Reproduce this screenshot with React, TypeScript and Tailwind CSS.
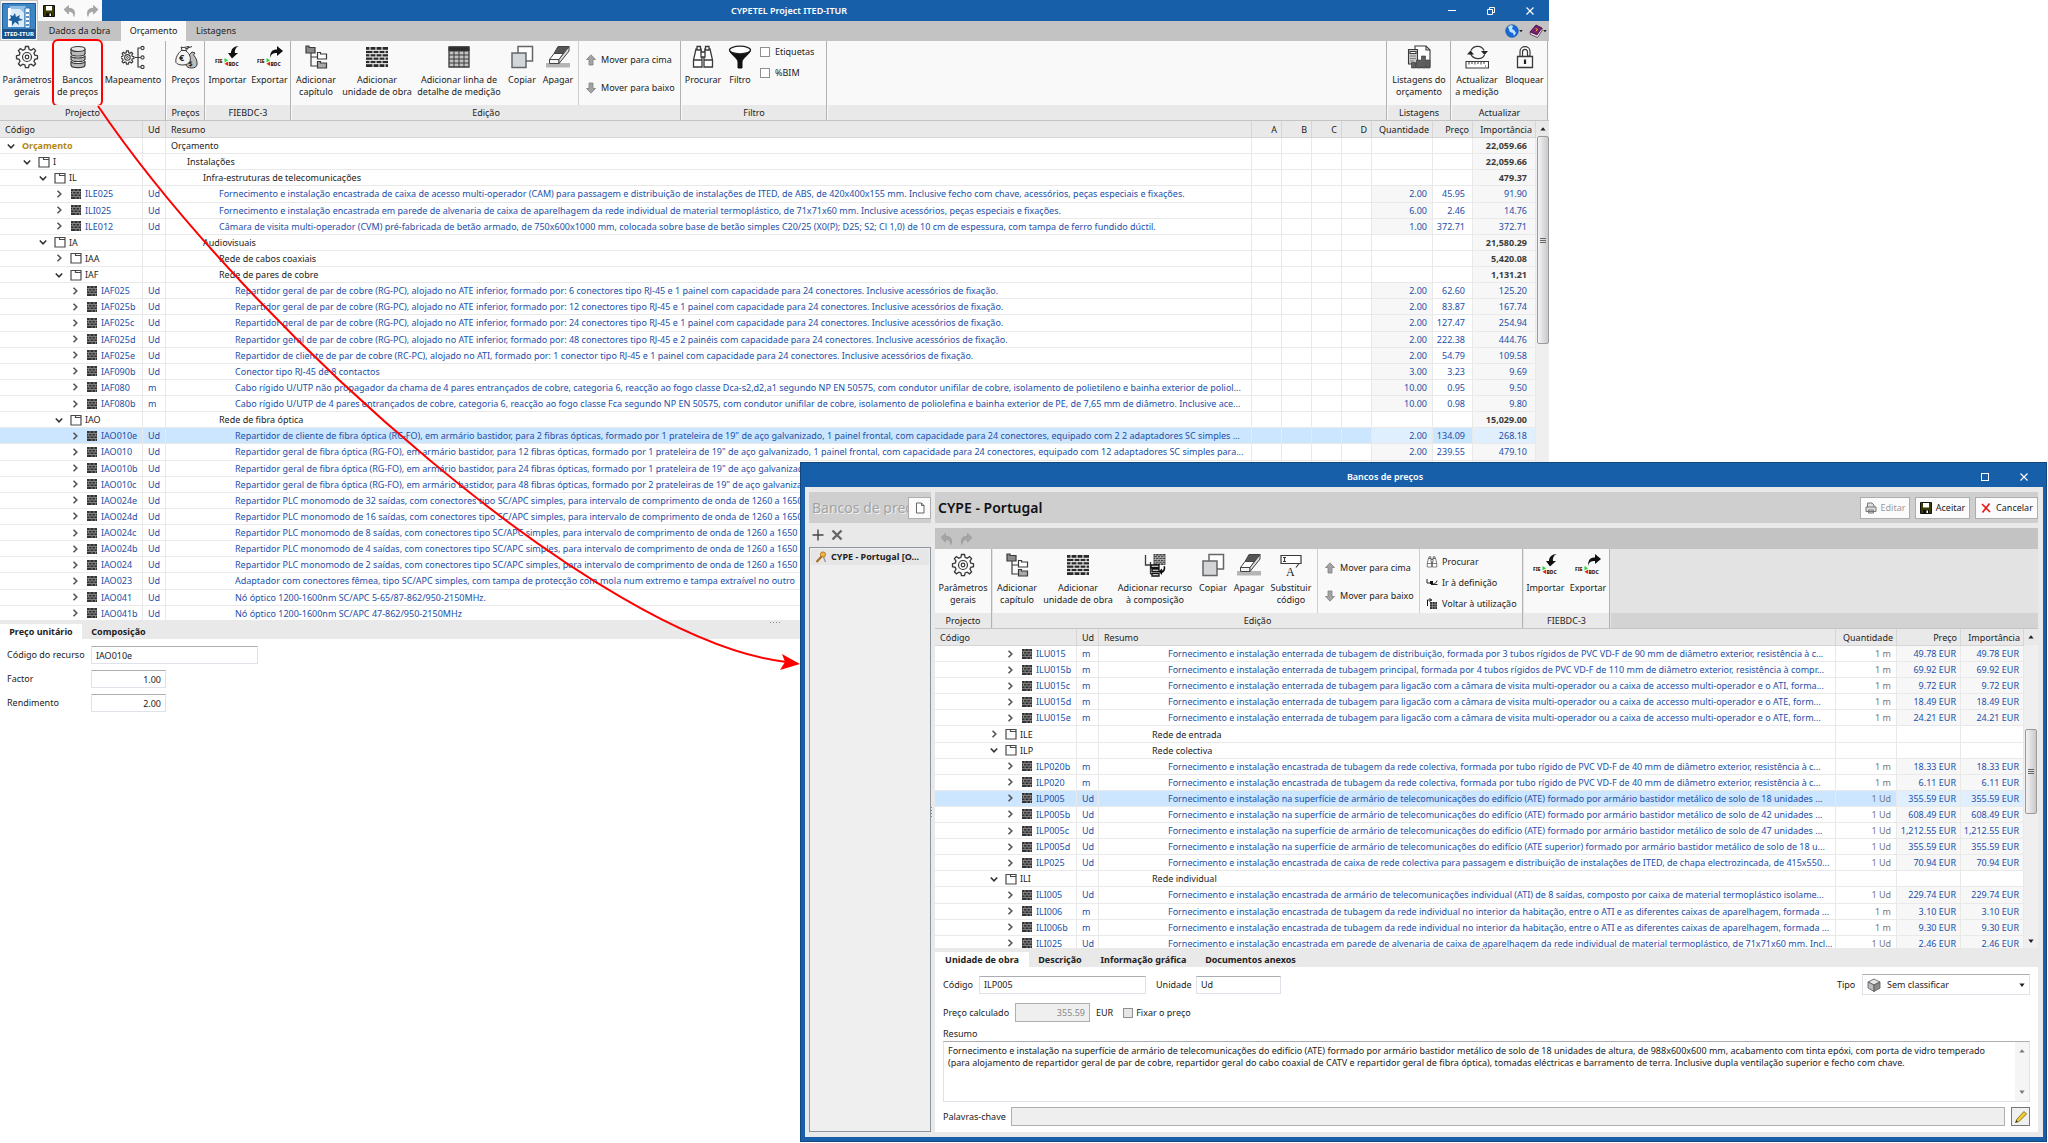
import React from "react"

import type { FC, ReactNode } from "react"

import clsx from "clsx"

type Item = {
  level: number
  open?: boolean
  code: string
  unit?: string
  text: string
  qty?: string
  price?: string
  total?: string
  selected?: boolean
}

const chapter = (level: number, open: boolean, code: string, text: string, total?: string): Item => ({
  level,
  open,
  code,
  text,
  total,
})

const work = (
  level: number,
  code: string,
  unit: string,
  text: string,
  qty: string,
  price: string,
  total: string,
  selected = false
): Item => ({ level, code, unit, text, qty, price, total, selected })

const budget: Item[] = [
  chapter(0, true, "Orçamento", "Orçamento", "22,059.66"),
  chapter(1, true, "I", "Instalações", "22,059.66"),
  chapter(2, true, "IL", "Infra-estruturas de telecomunicações", "479.37"),
  work(3, "ILE025", "Ud", "Fornecimento e instalação encastrada de caixa de acesso multi-operador (CAM) para passagem e distribuição de instalações de ITED, de ABS, de 420x400x155 mm. Inclusive fecho com chave, acessórios, peças especiais e fixações.", "2.00", "45.95", "91.90"),
  work(3, "ILI025", "Ud", "Fornecimento e instalação encastrada em parede de alvenaria de caixa de aparelhagem da rede individual de material termoplástico, de 71x71x60 mm. Inclusive acessórios, peças especiais e fixações.", "6.00", "2.46", "14.76"),
  work(3, "ILE012", "Ud", "Câmara de visita multi-operador (CVM) pré-fabricada de betão armado, de 750x600x1000 mm, colocada sobre base de betão simples C20/25 (X0(P); D25; S2; Cl 1,0) de 10 cm de espessura, com tampa de ferro fundido dúctil.", "1.00", "372.71", "372.71"),
  chapter(2, true, "IA", "Audiovisuais", "21,580.29"),
  chapter(3, false, "IAA", "Rede de cabos coaxiais", "5,420.08"),
  chapter(3, true, "IAF", "Rede de pares de cobre", "1,131.21"),
  work(4, "IAF025", "Ud", "Repartidor geral de par de cobre (RG-PC), alojado no ATE inferior, formado por: 6 conectores tipo RJ-45 e 1 painel com capacidade para 24 conectores. Inclusive acessórios de fixação.", "2.00", "62.60", "125.20"),
  work(4, "IAF025b", "Ud", "Repartidor geral de par de cobre (RG-PC), alojado no ATE inferior, formado por: 12 conectores tipo RJ-45 e 1 painel com capacidade para 24 conectores. Inclusive acessórios de fixação.", "2.00", "83.87", "167.74"),
  work(4, "IAF025c", "Ud", "Repartidor geral de par de cobre (RG-PC), alojado no ATE inferior, formado por: 24 conectores tipo RJ-45 e 1 painel com capacidade para 24 conectores. Inclusive acessórios de fixação.", "2.00", "127.47", "254.94"),
  work(4, "IAF025d", "Ud", "Repartidor geral de par de cobre (RG-PC), alojado no ATE inferior, formado por: 48 conectores tipo RJ-45 e 2 painéis com capacidade para 24 conectores. Inclusive acessórios de fixação.", "2.00", "222.38", "444.76"),
  work(4, "IAF025e", "Ud", "Repartidor de cliente de par de cobre (RC-PC), alojado no ATI, formado por: 1 conector tipo RJ-45 e 1 painel com capacidade para 24 conectores. Inclusive acessórios de fixação.", "2.00", "54.79", "109.58"),
  work(4, "IAF090b", "Ud", "Conector tipo RJ-45 de 8 contactos", "3.00", "3.23", "9.69"),
  work(4, "IAF080", "m", "Cabo rígido U/UTP não propagador da chama de 4 pares entrançados de cobre, categoria 6, reacção ao fogo classe Dca-s2,d2,a1 segundo NP EN 50575, com condutor unifilar de cobre, isolamento de polietileno e bainha exterior de poliol...", "10.00", "0.95", "9.50"),
  work(4, "IAF080b", "m", "Cabo rígido U/UTP de 4 pares entrançados de cobre, categoria 6, reacção ao fogo classe Fca segundo NP EN 50575, com condutor unifilar de cobre, isolamento de poliolefina e bainha exterior de PE, de 7,65 mm de diâmetro. Inclusive ace...", "10.00", "0.98", "9.80"),
  chapter(3, true, "IAO", "Rede de fibra óptica", "15,029.00"),
  work(4, "IAO010e", "Ud", "Repartidor de cliente de fibra óptica (RC-FO), em armário bastidor, para 2 fibras ópticas, formado por 1 prateleira de 19\" de aço galvanizado, 1 painel frontal, com capacidade para 24 conectores, equipado com 2 2 adaptadores SC simples ...", "2.00", "134.09", "268.18", true),
  work(4, "IAO010", "Ud", "Repartidor geral de fibra óptica (RG-FO), em armário bastidor, para 12 fibras ópticas, formado por 1 prateleira de 19\" de aço galvanizado, 1 painel frontal, com capacidade para 24 conectores, equipado com 12 adaptadores SC simples para...", "2.00", "239.55", "479.10"),
  work(4, "IAO010b", "Ud", "Repartidor geral de fibra óptica (RG-FO), em armário bastidor, para 24 fibras ópticas, formado por 1 prateleira de 19\" de aço galvanizado, 1 painel frontal", "", "", ""),
  work(4, "IAO010c", "Ud", "Repartidor geral de fibra óptica (RG-FO), em armário bastidor, para 48 fibras ópticas, formado por 2 prateleiras de 19\" de aço galvanizado, 2 painéis frontais", "", "", ""),
  work(4, "IAO024e", "Ud", "Repartidor PLC monomodo de 32 saídas, com conectores tipo SC/APC simples, para intervalo de comprimento de onda de 1260 a 1650 nm", "", "", ""),
  work(4, "IAO024d", "Ud", "Repartidor PLC monomodo de 16 saídas, com conectores tipo SC/APC simples, para intervalo de comprimento de onda de 1260 a 1650 nm", "", "", ""),
  work(4, "IAO024c", "Ud", "Repartidor PLC monomodo de 8 saídas, com conectores tipo SC/APC simples, para intervalo de comprimento de onda de 1260 a 1650 nm", "", "", ""),
  work(4, "IAO024b", "Ud", "Repartidor PLC monomodo de 4 saídas, com conectores tipo SC/APC simples, para intervalo de comprimento de onda de 1260 a 1650 nm", "", "", ""),
  work(4, "IAO024", "Ud", "Repartidor PLC monomodo de 2 saídas, com conectores tipo SC/APC simples, para intervalo de comprimento de onda de 1260 a 1650 nm", "", "", ""),
  work(4, "IAO023", "Ud", "Adaptador com conectores fêmea, tipo SC/APC simples, com tampa de protecção com mola num extremo e tampa extraível no outro", "", "", ""),
  work(4, "IAO041", "Ud", "Nó óptico 1200-1600nm SC/APC 5-65/87-862/950-2150MHz.", "", "", ""),
  work(4, "IAO041b", "Ud", "Nó óptico 1200-1600nm SC/APC 47-862/950-2150MHz", "", "", ""),
]

const bank: Item[] = [
  work(4, "ILU015", "m", "Fornecimento e instalação enterrada de tubagem de distribuição, formada por 3 tubos rígidos de PVC VD-F de 90 mm de diâmetro exterior, resistência à c...", "1 m", "49.78 EUR", "49.78 EUR"),
  work(4, "ILU015b", "m", "Fornecimento e instalação enterrada de tubagem principal, formada por 4 tubos rígidos de PVC VD-F de 110 mm de diâmetro exterior, resistência à compr...", "1 m", "69.92 EUR", "69.92 EUR"),
  work(4, "ILU015c", "m", "Fornecimento e instalação enterrada de tubagem para ligacão com a câmara de visita multi-operador ou a caixa de accesso multi-operador e o ATI, forma...", "1 m", "9.72 EUR", "9.72 EUR"),
  work(4, "ILU015d", "m", "Fornecimento e instalação enterrada de tubagem para ligacão com a câmara de visita multi-operador ou a caixa de accesso multi-operador e o ATE, form...", "1 m", "18.49 EUR", "18.49 EUR"),
  work(4, "ILU015e", "m", "Fornecimento e instalação enterrada de tubagem para ligacão com a câmara de visita multi-operador ou a caixa de accesso multi-operador e o ATE, form...", "1 m", "24.21 EUR", "24.21 EUR"),
  chapter(3, false, "ILE", "Rede de entrada"),
  chapter(3, true, "ILP", "Rede colectiva"),
  work(4, "ILP020b", "m", "Fornecimento e instalação encastrada de tubagem da rede colectiva, formada por tubo rígido de PVC VD-F de 40 mm de diâmetro exterior, resistência à c...", "1 m", "18.33 EUR", "18.33 EUR"),
  work(4, "ILP020", "m", "Fornecimento e instalação encastrada de tubagem da rede colectiva, formada por tubo rígido de PVC VD-F de 40 mm de diâmetro exterior, resistência à c...", "1 m", "6.11 EUR", "6.11 EUR"),
  work(4, "ILP005", "Ud", "Fornecimento e instalação na superfície de armário de telecomunicações do edifício (ATE) formado por armário bastidor metálico de solo de 18 unidades ...", "1 Ud", "355.59 EUR", "355.59 EUR", true),
  work(4, "ILP005b", "Ud", "Fornecimento e instalação na superfície de armário de telecomunicações do edifício (ATE) formado por armário bastidor metálico de solo de 42 unidades ...", "1 Ud", "608.49 EUR", "608.49 EUR"),
  work(4, "ILP005c", "Ud", "Fornecimento e instalação na superfície de armário de telecomunicações do edifício (ATE) formado por armário bastidor metálico de solo de 47 unidades ...", "1 Ud", "1,212.55 EUR", "1,212.55 EUR"),
  work(4, "ILP005d", "Ud", "Fornecimento e instalação na superfície de armário de telecomunicações do edifício (ATE superior) formado por armário bastidor metálico de solo de 18 u...", "1 Ud", "355.59 EUR", "355.59 EUR"),
  work(4, "ILP025", "Ud", "Fornecimento e instalação encastrada de caixa de rede colectiva para passagem e distribuição de instalações de ITED, de chapa electrozincada, de 415x550...", "1 Ud", "70.94 EUR", "70.94 EUR"),
  chapter(3, true, "ILI", "Rede individual"),
  work(4, "ILI005", "Ud", "Fornecimento e instalação encastrada de armário de telecomunicações individual (ATI) de 8 saídas, composto por caixa de material termoplástico isolame...", "1 Ud", "229.74 EUR", "229.74 EUR"),
  work(4, "ILI006", "m", "Fornecimento e instalação encastrada de tubagem da rede individual no interior da habitação, entre o ATI e as diferentes caixas de aparelhagem, formada ...", "1 m", "3.10 EUR", "3.10 EUR"),
  work(4, "ILI006b", "m", "Fornecimento e instalação encastrada de tubagem da rede individual no interior da habitação, entre o ATI e as diferentes caixas de aparelhagem, formada ...", "1 m", "9.30 EUR", "9.30 EUR"),
  work(4, "ILI025", "Ud", "Fornecimento e instalação encastrada em parede de alvenaria de caixa de aparelhagem da rede individual de material termoplástico, de 71x71x60 mm. Incl...", "1 Ud", "2.46 EUR", "2.46 EUR"),
]

/* ---------- icons ---------- */

const Svg: FC<{ box?: number; className?: string; children: ReactNode }> = ({
  box = 24,
  className = "w-6 h-6",
  children,
}) => (
  <svg
    viewBox={`0 0 ${box} ${box}`}
    className={clsx("shrink-0", className)}
    fill="none"
    stroke="#3a3a3a"
    aria-hidden="true"
  >
    {children}
  </svg>
)

const gearPath =
  "M10.5 1.5h3l.6 2.9 2 .8 2.5-1.6 2 2-1.6 2.5.8 2 2.7.6v3l-2.7.6-.8 2 1.6 2.5-2 2-2.5-1.6-2 .8-.6 2.7h-3l-.6-2.7-2-.8-2.5 1.6-2-2L5 16.3l-.8-2-2.7-.6v-3l2.7-.6.8-2L3.4 5.6l2-2 2.5 1.6 2-.8z"

const GearIcon = () => (
  <Svg>
    <path d={gearPath} strokeWidth="1.3" />
    <circle cx="12" cy="12" r="4.5" strokeWidth="1.2" />
    <circle cx="12" cy="12" r="1.8" strokeWidth="1.2" />
  </Svg>
)

const DatabaseIcon = () => (
  <Svg>
    <g strokeWidth="1.2" fill="#b9b9b9">
      <path d="M5 4v16c0 3.5 14 3.5 14 0V4" />
      <ellipse cx="12" cy="4" rx="7" ry="2.5" fill="#e8e8e8" />
      <path d="M5 9c0 3.3 14 3.3 14 0M5 14.5c0 3.3 14 3.3 14 0" stroke="#fff" strokeWidth="2.5" fill="none" />
      <path d="M5 8.5c0 3.3 14 3.3 14 0M5 10.5c0 3.3 14 3.3 14 0M5 14c0 3.3 14 3.3 14 0M5 16c0 3.3 14 3.3 14 0" fill="none" />
    </g>
  </Svg>
)

const MappingIcon = () => (
  <Svg>
    <g transform="translate(-1 5) scale(.62)">
      <path d={gearPath} strokeWidth="1.9" />
      <circle cx="12" cy="12" r="4.5" strokeWidth="1.7" />
      <circle cx="12" cy="12" r="1.5" strokeWidth="1.5" />
    </g>
    <path d="M14 12.5h6M20 3h-3v19h3" strokeWidth="1.2" />
    <g strokeWidth="1.1" fill="#fff">
      <circle cx="21.5" cy="3" r="1.6" />
      <circle cx="21.5" cy="12.5" r="1.6" />
      <circle cx="21.5" cy="22" r="1.6" />
    </g>
  </Svg>
)

const MoneyIcon = () => (
  <Svg>
    <g strokeWidth="1">
      <path d="M16 9l2-2 3 1-1.5 2c3 3 4 7 3.5 10-1 4-10 4-11 0-.5-4 1-8 4-11z" fill="#bdbdbd" />
      <path d="M8 5l-1-3c3 1.5 5-.5 8-.5L12 6c4 3 5 7 4 10.5C14 21 4 21 2 17.5 1 13 4 8 8 5z" fill="#f4f4f4" />
      <path d="M8 5.5h4M11 4l7-2.5" />
    </g>
    <text x="5" y="16" fontSize="9" fontWeight="700" fill="#222" stroke="none">€</text>
    <text x="14.5" y="21" fontSize="7" fontWeight="700" fill="#222" stroke="none">$</text>
  </Svg>
)

const FiebdcIcon: FC<{ out?: boolean }> = ({ out }) => (
  <svg viewBox="0 0 28 24" className="w-7 h-6 shrink-0" aria-hidden="true">
    {out ? (
      <path d="M14 13c0-6 2-8.5 7-8.5V1l6 5-6 5V8c-4 0-6 1-7 5z" fill="#111" />
    ) : (
      <path d="M25 1c-3 1-4.5 4-4 7h3l-6 5.500-4-5.500h3c0-4 3-7 8-7z" fill="#111" />
    )}
    <text x="1" y="17.5" fontSize="5" fontWeight="800" fill="#222">FIE</text>
    <text x="14.5" y="21" fontSize="5" fontWeight="800" fill="#222">BDC</text>
    <path d="M10.500 13l3.500 2.300-3.500 2.300z" fill="#2bd42b" />
    <path d="M14 16.500l-3.500 2.300 3.500 2.300z" fill="#f02020" />
  </svg>
)

const TreeIcon = () => (
  <Svg>
    <g strokeWidth="1.2">
      <path d="M7 8v13h6M7 12h6" />
      <path d="M2 1h3v1.500h6V8H2z" fill="#8a8a8a" />
      <path d="M13.500 7.500h3V9h6v5h-9z" fill="#fff" />
      <path d="M13.500 16.500h3V18h6v5h-9z" fill="#a8a8a8" />
    </g>
  </Svg>
)

const bricks = (
  <>
    <path d="M1 2h22v20H1z" fill="#2a2a2a" />
    <path
      d="M1 5.300h22M1 8.700h22M1 12h22M1 15.300h22M1 18.700h22M5 2v3.300M11 2v3.300M17 2v3.300M8 5.300v3.400M14 5.300v3.400M20 5.300v3.400M5 8.700V12M11 8.700V12M17 8.700V12M8 12v3.300M14 12v3.300M20 12v3.300M5 15.300v3.400M11 15.300v3.400M17 15.300v3.400M8 18.700V22M14 18.700V22M20 18.700V22"
      stroke="#fff"
      strokeWidth="1"
    />
  </>
)

const WallIcon = () => (
  <Svg>
    <g stroke="none">{bricks}</g>
  </Svg>
)

const SmallWallIcon = () => (
  <Svg box={12} className="w-3 h-3">
    <path d="M1 1h10v10H1z" fill="#333" stroke="none" />
    <path d="M1 3.500h10M1 6h10M1 8.500h10M4 1v2.500M8 1v2.500M6 3.500V6M9.500 3.500V6M2.500 3.500V6M4 6v2.500M8 6v2.500M6 8.500V11M9.500 8.500V11" stroke="#aaa" strokeWidth=".6" />
  </Svg>
)

const GridIcon = () => (
  <Svg>
    <path d="M2 2h20v20H2z" fill="#c2c2c2" strokeWidth="1.300" />
    <path d="M2 2h20v4H2z" fill="#2d2d2d" />
    <path d="M2 10h20M2 14h20M2 18h20M7 6v16M12 6v16M17 6v16" strokeWidth="1" />
  </Svg>
)

const CopyIcon = () => (
  <Svg>
    <path d="M8 1.500h14.500V16H8z" fill="#fff" stroke="#666" strokeWidth="1.500" />
    <path d="M2 8h14v14.500H2z" fill="#d3d6d9" stroke="#666" strokeWidth="1.500" />
  </Svg>
)

const EraserIcon = () => (
  <Svg>
    <path d="M0 18h5l4 1 4-1h11v4.500H0z" fill="#b5b5b5" stroke="none" />
    <g stroke="#444" strokeWidth="1" strokeLinejoin="round">
      <path d="M12 1.500h11l-5.500 7H8z" fill="#555" />
      <path d="M8 8.500h9.500L13 14.500H3.500z" fill="#fff" />
      <path d="M3.500 14.500H13v4H3.500z" fill="#f4f4f4" />
      <path d="M23 1.500V6l-10 12.500v-4z" fill="#dcdcdc" />
    </g>
  </Svg>
)

const BinocularsIcon: FC<{ small?: boolean }> = ({ small }) => (
  <Svg className={small ? "w-3 h-3" : "w-6 h-6"}>
    <g strokeWidth="1.300" fill="#fff">
      <path d="M5 4h5l1 8v10H2.500V15z" />
      <path d="M19 4h-5l-1 8v10h8.500V15z" />
      <path d="M6 1.500h3.500V5H6zM14.500 1.500H18V5h-3.500zM2.500 15H11M13 15h8.500M10 7h4v5h-4z" />
    </g>
  </Svg>
)

const FunnelIcon = () => (
  <Svg>
    <path d="M1.500 5c0 4 8.500 8 8.500 12v6h4v-6c0-4 8.500-8 8.500-12z" fill="#111" stroke="#111" />
    <ellipse cx="12" cy="5" rx="10.500" ry="3.800" fill="#fff" stroke="#222" strokeWidth="1.300" />
  </Svg>
)

const ArrowIcon: FC<{ down?: boolean }> = ({ down }) => (
  <Svg box={12} className={clsx("w-3 h-3", down && "rotate-180")}>
    <path d="M6 .8l4.500 4.700H8V11H4V5.500H1.500z" fill="#a3a3a3" stroke="#808080" strokeWidth=".8" />
  </Svg>
)

const ReportIcon = () => (
  <Svg>
    <g strokeWidth="1.100">
      <path d="M8 1h11l4 4v17H8z" fill="#fff" />
      <path d="M19 1v4h4" />
      <path d="M1.500 4.500h9V19h-9z" fill="#c9c9c9" />
      <path d="M3 6.500h6v2H3z" fill="#fff" />
      <path d="M3.500 11h1M5.500 11h1M7.500 11h1M3.500 13.500h1M5.500 13.500h1M7.500 13.500h1M3.500 16h1M5.500 16h1" />
    </g>
    <path d="M4.500 17.500h4.200V23H4.500zM9.500 15h4.200v8H9.500zM14.500 11h4v12h-4zM19.200 15h3.600v8h-3.600z" fill="#5f5f5f" stroke="#333" strokeWidth=".6" />
  </Svg>
)

const UpdateIcon = () => (
  <Svg>
    <path d="M6 5.500C9-.5 17 .5 19 5.500M19.500 10C17 15 8 15 5.500 8.500" strokeWidth="1.300" />
    <path d="M16 6h7l-3.500 4zM2 9.500h7L5.500 5.500z" fill="#222" stroke="none" />
    <path d="M1 16.500h22.500V23H1z" fill="#fff" strokeWidth="1.100" />
    <path d="M4 17v2.500M7 17v2M10 17v2.500M13 17v2M16 17v2.500M19 17v2M20 21h1" strokeWidth="1" />
  </Svg>
)

const LockIcon = () => (
  <Svg>
    <path d="M7 11V6.500C7 0 17 0 17 6.500V11h-2.500V7c0-3.500-5-3.500-5 0v4" fill="#fff" strokeWidth="1.200" />
    <path d="M4.500 11.500h15v11h-15z" fill="#fafafa" strokeWidth="1.300" />
    <path d="M12 14.500v4.500" strokeWidth="2.200" stroke="#222" />
  </Svg>
)

const ResourceIcon = () => (
  <Svg>
    <g transform="translate(10 0) scale(.54)" stroke="none">{bricks}</g>
    <path d="M2.500 2v10h5M7.500 9v12M7.500 15h4M7.500 21h4" strokeWidth="1.300" />
    <path d="M8 12h8v2.500H8zM9 16h7v2.500H9zM9 20.500h7V23H9z" fill="#fff" stroke="#111" strokeWidth="1.300" />
    <path d="M22 13c1 4-1 6.500-3 7v2l-3.500-3.500L19 15.500v2c1.500-.5 2-2 1.500-4z" fill="#111" stroke="none" />
  </Svg>
)

const ReplaceIcon = () => (
  <Svg>
    <path d="M2 2.500h20v8H2z" fill="#fff" strokeWidth="1.200" />
    <path d="M4 4.500h3M4 8.500h3M5.500 4.500v4M20 10.500l-3 4" strokeWidth="1.100" />
    <text x="7" y="22.500" fontSize="12" fontFamily="Liberation Serif, serif" fill="#222" stroke="none">A</text>
  </Svg>
)

const FolderIcon = () => (
  <Svg box={12} className="w-3 h-3">
    <path d="M1 1.500h10v9.500H1z" fill="#fff" stroke="#4a4a4a" strokeWidth="1.200" />
    <path d="M5.500 1.500v2H11" stroke="#4a4a4a" strokeWidth="1.200" />
  </Svg>
)

const Chevron: FC<{ open?: boolean }> = ({ open }) => (
  <Svg box={8} className={clsx("w-2 h-2", open && "rotate-90")}>
    <path d="M2.500 .8L5.800 4 2.500 7.200" stroke={open ? "#333" : "#555"} strokeWidth="1.600" />
  </Svg>
)

const UndoIcon: FC<{ redo?: boolean }> = ({ redo }) => (
  <Svg box={14} className={clsx("w-3.5 h-3.5", redo && "-scale-x-100")}>
    <path d="M1 5.500L5.500 1.500v2.800C10 4 13 6.500 11 12.500c-.5-4-2.500-5-5.500-5v2.700z" fill="#a6a6a6" stroke="#8c8c8c" strokeWidth=".5" />
  </Svg>
)

const FloppyIcon = () => (
  <Svg box={12} className="w-3 h-3">
    <path d="M.5.500h11v11H.500z" fill="#3c3c00" stroke="#111" strokeWidth="1" />
    <path d="M3 1h6v4.500H3z" fill="#fff" stroke="none" />
    <path d="M3 8h6v3.500H3z" fill="#111" stroke="none" />
    <path d="M6.500 8.500H8v2.500H6.500z" fill="#fff" stroke="none" />
  </Svg>
)

const AppLogo = () => (
  <svg viewBox="0 0 34 36" className="w-[34px] h-9" aria-hidden="true">
    <path d="M.5.500h33v35H.500z" fill="#3c86c6" stroke="#1c5a96" />
    <path d="M8 3h15l4 4v17H6V8z" fill="#8fbfe6" />
    <path d="M6 5h3v19H6z" fill="#fff" />
    <path d="M9 6h9l4 4v14H9z" fill="#dcebf8" />
    <path d="M8 12l3 1 2-3 1 4 4-2-1 3 4 2-5 1 1 4-4-3-3 4v-5l-4-1 3-2z" fill="#1e5f9f" />
    <path d="M23 5h5v20h-5z" fill="#fff" stroke="#2b6fae" />
    <path d="M24 10h3M24 14h3M24 18h3M24 22h3" stroke="#2b6fae" strokeWidth="1.500" />
    <path d="M1 26h32v9H1z" fill="#1b4f86" />
    <text x="17" y="33" textAnchor="middle" fontSize="6" fontWeight="700" fill="#fff">ITED-ITUR</text>
  </svg>
)

const GlobeIcon = () => (
  <Svg box={14} className="w-3.5 h-3.5">
    <circle cx="7" cy="7" r="6.300" fill="#1768d8" stroke="#1450a0" strokeWidth=".6" />
    <path d="M3 3c2-2 4-2 5-1L7 5l2 1 2 3-2 3-1-3-3-1z" fill="#bfe4ff" stroke="none" />
  </Svg>
)

const BookIcon = () => (
  <Svg box={14} className="w-3.5 h-3.5">
    <path d="M1 8l6-7 6 3-5 7z" fill="#7a1a70" stroke="#3c0a38" strokeWidth=".8" />
    <path d="M1 8l7 3 5-7v2.500L8.500 13.500 1.500 10.500z" fill="#f1e6ef" stroke="#3c0a38" strokeWidth=".7" />
    <path d="M6.500 4.500l2 .8-1.500 2" stroke="#f0c020" strokeWidth="1" />
  </Svg>
)

const Caret: FC<{ up?: boolean; className?: string }> = ({ up, className = "w-1.5 h-1.5" }) => (
  <Svg box={8} className={clsx(className, up && "rotate-180")}>
    <path d="M.5 2h7L4 6.500z" fill="#222" stroke="none" />
  </Svg>
)

const CloseIcon = () => (
  <Svg box={10} className="w-2.5 h-2.5">
    <path d="M1.500 1.500l7 7M8.500 1.500l-7 7" stroke="#fff" strokeWidth="1.200" />
  </Svg>
)

const GotoIcon: FC<{ back?: boolean }> = ({ back }) =>
  back ? (
    <Svg box={12} className="w-3 h-3">
      <path d="M4 4h7v7H4z" fill="#333" stroke="none" />
      <path d="M4 6.300h7M4 8.700h7M6.500 4v7M9 4v7" stroke="#bbb" strokeWidth=".5" />
      <path d="M1.500 8V2h4M3.500.500l2.200 1.500-2.200 1.500" stroke="#111" />
    </Svg>
  ) : (
    <Svg box={12} className="w-3 h-3">
      <path d="M1 2v4h4M5 7.500h6.500" stroke="#222" />
      <path d="M4 4h3v3H4z" fill="#111" stroke="none" />
      <path d="M7.500 6.500c1.500 0 3-.5 3.500-3" stroke="#222" />
    </Svg>
  )

/* ---------- ribbon ---------- */

const RibbonButton: FC<{ icon: ReactNode; lines: string[]; width: string; className?: string }> = ({
  icon,
  lines,
  width,
  className,
}) => (
  <button type="button" className={clsx("flex flex-col items-center gap-[5px] pt-1 leading-3 whitespace-nowrap", width, className)}>
    {icon}
    <span className="flex flex-col items-center">
      {lines.map(l => (
        <span key={l}>{l}</span>
      ))}
    </span>
  </button>
)

const RibbonGroup: FC<{ title: string; children: ReactNode }> = ({ title, children }) => (
  <section className="flex flex-col mr-px border-r border-[#b2b2b2] bg-[#f9f9f9]">
    <div className="flex h-16">{children}</div>
    <h2 className="h-[15px] bg-[#e9e9e9] text-center leading-[15px]">{title}</h2>
  </section>
)

const MoveButtons = () => (
  <div className="flex flex-col gap-4 w-[102px] pt-[13px] pl-1.5 ml-0.5 border-l border-[#cfcfcf]">
    <button type="button" className="flex items-center gap-1 leading-3 whitespace-nowrap">
      <ArrowIcon /> Mover para cima
    </button>
    <button type="button" className="flex items-center gap-1 leading-3 whitespace-nowrap">
      <ArrowIcon down /> Mover para baixo
    </button>
  </div>
)

/* ---------- tree table ---------- */

const th = "h-[17px] p-0 pt-0.5 font-normal leading-[14px] bg-[#e9e9e9] border-r border-b border-[#d6d6d6]"
const td = "h-4 p-0 leading-[15px] border-r border-b border-[#e9e9e9] whitespace-nowrap overflow-hidden"

const CodeCell: FC<{ item: Item }> = ({ item }) => (
  <td className={td}>
    <div className="flex items-center h-[15px]" style={{ paddingLeft: 7 + item.level * 16 }}>
      <button type="button" aria-label={`${item.open ? "Fechar" : "Abrir"} ${item.code}`} className="mr-[7px]">
        <Chevron open={item.open} />
      </button>
      {item.level > 0 && (
        <span className="mr-[3px]">{item.unit ? <SmallWallIcon /> : <FolderIcon />}</span>
      )}
      <span className={clsx(item.level === 0 && "font-bold text-[#b4870f]")}>{item.code}</span>
    </div>
  </td>
)

const TreeTable: FC<{ items: Item[]; variant: "budget" | "bank" }> = ({ items, variant }) => {
  const isBudget = variant === "budget"
  const extra = isBudget ? ["A", "B", "C", "D"] : []
  return (
    <table
      className={clsx(
        "table-fixed w-full border-separate border-spacing-0 text-right",
        isBudget ? "h-[501px]" : "h-[323px]"
      )}
    >
      <colgroup>
        <col className={isBudget ? "w-[143px]" : "w-[142px]"} />
        <col className={isBudget ? "w-[23px]" : "w-[22px]"} />
        <col />
        {extra.map(c => (
          <col key={c} className="w-[30px]" />
        ))}
        <col className="w-[61px]" />
        <col className={isBudget ? "w-10" : "w-16"} />
        <col className="w-[63px]" />
      </colgroup>
      <thead>
        <tr>
          <th className={clsx(th, "text-left pl-[5px]")}>Código</th>
          <th className={clsx(th, "text-left pl-[5px]")}>Ud</th>
          <th className={clsx(th, "text-left pl-[5px]")}>Resumo</th>
          {extra.map(c => (
            <th key={c} className={clsx(th, "pr-1")}>{c}</th>
          ))}
          <th className={clsx(th, "pr-[3px]")}>Quantidade</th>
          <th className={clsx(th, "pr-[3px]")}>Preço</th>
          <th className={clsx(th, "pr-[3px]")}>Importância</th>
        </tr>
      </thead>
      <tbody>
        {items.map(item => {
          const isWork = Boolean(item.unit)
          const soft = item.selected ? "bg-[#e0effd]" : "bg-[#f7f7f7]"
          return (
            <tr
              key={item.code}
              className={clsx(item.selected ? "bg-[#cbe6fe]" : "bg-white", isWork ? "text-[#234fa8]" : "text-[#222]")}
            >
              <CodeCell item={item} />
              <td className={clsx(td, "text-left pl-[5px]")}>{item.unit}</td>
              <td className={clsx(td, "text-left")}>
                <div style={{ paddingLeft: 5 + item.level * 16 }}>{item.text}</div>
              </td>
              {extra.map(c => (
                <td key={c} className={td} />
              ))}
              <td className={clsx(td, "pr-[5px]", isBudget ? isWork && soft : "text-[#777]")}>{item.qty}</td>
              <td className={clsx(td, isBudget ? "pr-[7px]" : "pr-1", !isBudget && isWork && soft)}>{item.price}</td>
              <td
                className={clsx(
                  td,
                  isBudget ? "pr-2" : "pr-1",
                  (isBudget || isWork) && soft,
                  !isWork && "font-bold text-[#3c3c3c]"
                )}
              >
                {item.total}
              </td>
            </tr>
          )
        })}
      </tbody>
    </table>
  )
}

const Thumb: FC<{ className: string }> = ({ className }) => (
  <div className={clsx("flex flex-col items-center justify-center gap-px rounded-xs border border-[#9a9a9a] bg-linear-to-r from-[#f4f4f4] to-[#c9c9ce]", className)}>
    <i className="w-1.5 h-px bg-[#666]" />
    <i className="w-1.5 h-px bg-[#666]" />
    <i className="w-1.5 h-px bg-[#666]" />
  </div>
)

const Grip: FC<{ vertical?: boolean }> = ({ vertical }) => (
  <div className={clsx("flex gap-0.5", vertical && "flex-col")}>
    {[0, 1, 2, 3].map(i => (
      <i key={i} className="w-px h-px bg-[#888]" />
    ))}
  </div>
)

const field = "h-[18px] px-1 bg-white border border-[#dfe2e8] border-t-[#abadb3] outline-none text-[#222]"

/* ---------- windows ---------- */

const MainWindow = () => (
  <section className="mr-[499px] bg-white">
    <header className="flex">
      <div className="flex items-center justify-center w-[38px] h-[41px] bg-[#f4f4f4] border border-[#c9c9c9]">
        <AppLogo />
      </div>
      <div className="flex-1">
        <div className="flex h-[21px] bg-[#185fa9]">
          <div className="flex items-center gap-2 w-16 pl-[5px] bg-[#fafafa]">
            <button type="button" aria-label="Guardar"><FloppyIcon /></button>
            <button type="button" aria-label="Desfazer"><UndoIcon /></button>
            <button type="button" aria-label="Refazer"><UndoIcon redo /></button>
          </div>
          <h1 className="flex-1 pl-11 text-center font-semibold leading-[21px] text-white">CYPETEL Project ITED-ITUR</h1>
          <button type="button" aria-label="Minimizar" className="flex items-center justify-center w-[39px]">
            <i className="w-2 h-px bg-white" />
          </button>
          <button type="button" aria-label="Restaurar" className="flex items-center justify-center w-[39px]">
            <Svg box={10} className="w-2.5 h-2.5">
              <path d="M1.500 3.500h5v5h-5zM3.500 3.500v-2h5v5h-2" stroke="#fff" strokeWidth="1" />
            </Svg>
          </button>
          <button type="button" aria-label="Fechar" className="flex items-center justify-center w-[39px]">
            <CloseIcon />
          </button>
        </div>
        <nav className="flex h-5 bg-[#c3c3c3]">
          <button type="button" className="w-[83px]">Dados da obra</button>
          <button type="button" className="w-[65px] bg-[#f9f9f9]">Orçamento</button>
          <button type="button" className="w-[60px]">Listagens</button>
          <div className="flex items-center gap-0.5 ml-auto pr-0.5">
            <button type="button" aria-label="Idioma" className="flex items-center"><GlobeIcon /><Caret className="w-1 h-1" /></button>
            <button type="button" aria-label="Ajuda" className="flex items-center ml-1"><BookIcon /><Caret className="w-1 h-1" /></button>
          </div>
        </nav>
      </div>
    </header>

    <div className="flex bg-[#f9f9f9] border-b border-[#c4c4c4]">
      <RibbonGroup title="Projecto">
        <RibbonButton icon={<GearIcon />} lines={["Parâmetros", "gerais"]} width="w-[54px]" />
        <RibbonButton icon={<DatabaseIcon />} lines={["Bancos", "de preços"]} width="w-[47px]" className="rounded-sm outline-2 outline-[#f00]" />
        <RibbonButton icon={<MappingIcon />} lines={["Mapeamento"]} width="w-16" />
      </RibbonGroup>
      <RibbonGroup title="Preços">
        <RibbonButton icon={<MoneyIcon />} lines={["Preços"]} width="w-[37px]" />
      </RibbonGroup>
      <RibbonGroup title="FIEBDC-3">
        <RibbonButton icon={<FiebdcIcon />} lines={["Importar"]} width="w-[43px]" />
        <RibbonButton icon={<FiebdcIcon out />} lines={["Exportar"]} width="w-[41px]" />
      </RibbonGroup>
      <RibbonGroup title="Edição">
        <RibbonButton icon={<TreeIcon />} lines={["Adicionar", "capítulo"]} width="w-12" />
        <RibbonButton icon={<WallIcon />} lines={["Adicionar", "unidade de obra"]} width="w-[74px]" />
        <RibbonButton icon={<GridIcon />} lines={["Adicionar linha de", "detalhe de medição"]} width="w-[90px]" />
        <RibbonButton icon={<CopyIcon />} lines={["Copiar"]} width="w-9" />
        <RibbonButton icon={<EraserIcon />} lines={["Apagar"]} width="w-9" />
        <MoveButtons />
      </RibbonGroup>
      <RibbonGroup title="Filtro">
        <RibbonButton icon={<BinocularsIcon />} lines={["Procurar"]} width="w-[42px]" />
        <RibbonButton icon={<FunnelIcon />} lines={["Filtro"]} width="w-8" />
        <div className="flex flex-col gap-[9px] w-[70px] pl-1 pt-[5px]">
          {["Etiquetas", "%BIM"].map(l => (
            <label key={l} className="flex items-center gap-[5px] leading-3">
              <input type="checkbox" className="appearance-none w-2.5 h-2.5 bg-white border border-[#8e8f8f]" />
              {l}
            </label>
          ))}
        </div>
      </RibbonGroup>
      <div className="flex flex-col flex-1 justify-end mr-px border-r border-[#b2b2b2]">
        <div className="h-[15px] bg-[#e9e9e9]" />
      </div>
      <RibbonGroup title="Listagens">
        <RibbonButton icon={<ReportIcon />} lines={["Listagens do", "orçamento"]} width="w-[62px]" />
      </RibbonGroup>
      <RibbonGroup title="Actualizar">
        <RibbonButton icon={<UpdateIcon />} lines={["Actualizar", "a medição"]} width="w-[50px]" />
        <RibbonButton icon={<LockIcon />} lines={["Bloquear"]} width="w-[45px]" />
      </RibbonGroup>
    </div>

    <div className="flex h-[499px] overflow-hidden">
      <div className="flex-1">
        <TreeTable items={budget} variant="budget" />
      </div>
      <div className="flex flex-col items-center w-[13px] bg-[#efefef]">
        <div className="flex items-center justify-center w-full h-[15px] bg-[#e9e9e9]"><Caret up /></div>
        <Thumb className="w-3 h-[208px]" />
      </div>
    </div>

    <div className="flex justify-center h-1 pt-0.5 bg-[#e9e9e9]"><Grip /></div>
    <nav className="flex h-[15px] bg-[#e9e9e9] font-bold leading-[15px]">
      <button type="button" className="w-[82px] bg-white">Preço unitário</button>
      <button type="button" className="w-[73px]">Composição</button>
    </nav>
    <form className="flex flex-col gap-1.5 pt-[7px] pl-[7px]">
      <div className="flex items-center">
        <label htmlFor="recurso" className="w-[84px]">Código do recurso</label>
        <input id="recurso" defaultValue="IAO010e" className={clsx(field, "w-[167px]")} />
      </div>
      <div className="flex items-center">
        <label htmlFor="factor" className="w-[84px]">Factor</label>
        <input id="factor" defaultValue="1.00" className={clsx(field, "w-[75px] text-right")} />
      </div>
      <div className="flex items-center">
        <label htmlFor="rendimento" className="w-[84px]">Rendimento</label>
        <input id="rendimento" defaultValue="2.00" className={clsx(field, "w-[75px] text-right")} />
      </div>
    </form>
  </section>
)

const smallAction = "flex items-center gap-1 leading-3 whitespace-nowrap"
const dialogButton = "flex items-center justify-center gap-1 h-[22px] bg-[#fbfbfb] border border-[#adadad]"

const BankDialog = () => (
  <section role="dialog" aria-label="Bancos de preços" className="absolute left-[800px] right-px top-[462px] border-l-[5px] border-r-4 border-b-[5px] border-[#185fa9] bg-[#e9e9e9] outline -outline-offset-1 outline-[#12467f]">
    <header className="flex h-[25px] bg-[#185fa9] text-white">
      <h2 className="flex-1 text-center font-semibold leading-[29px]">Bancos de preços</h2>
      <button type="button" aria-label="Maximizar" className="flex items-center justify-center w-[39px] pt-1">
        <i className="w-2 h-2 border border-white" />
      </button>
      <button type="button" aria-label="Fechar" className="flex items-center justify-center w-[39px] pt-1">
        <CloseIcon />
      </button>
    </header>

    <div className="flex p-[5px] pl-1">
      <aside className="flex flex-col w-[122px]">
        <div className="flex items-center justify-between h-[31px] pl-[3px] bg-[#cfcfcf] overflow-hidden">
          <span className="flex-1 overflow-hidden whitespace-nowrap text-[14px] text-[#a3a3a3] text-shadow-[1px_1px_0_#f2f2f2]">Bancos de preços</span>
          <button type="button" aria-label="Novo" className={clsx(dialogButton, "w-[23px]")}>
            <Svg box={12} className="w-3 h-3">
              <path d="M2.500 1h5l2.500 2.500V11H2.500zM7.500 1v2.500H10" stroke="#555" strokeWidth=".9" fill="#fff" />
            </Svg>
          </button>
        </div>
        <div className="flex items-center gap-[7px] h-6 pl-[3px]">
          <button type="button" aria-label="Adicionar">
            <Svg box={12} className="w-3 h-3"><path d="M6 .5v11M.5 6h11" stroke="#444" strokeWidth="1.400" /></Svg>
          </button>
          <button type="button" aria-label="Eliminar">
            <Svg box={12} className="w-3 h-3"><path d="M1.500 1.500l9 9M10.500 1.500l-9 9" stroke="#666" strokeWidth="2.400" /></Svg>
          </button>
        </div>
        <ul className="flex-1 p-px bg-[#efefef] border border-[#8e949b]">
          <li className="flex items-center gap-1 h-4 pl-1 bg-[#e6e6e6] font-bold whitespace-nowrap">
            <Svg box={12} className="w-3 h-3">
              <path d="M1.500 11L7 5" stroke="#a86a1a" strokeWidth="2" />
              <circle cx="8" cy="3.500" r="2.600" fill="#f2b53c" stroke="#a86a1a" strokeWidth=".8" />
              <path d="M8.500 6l2 5" stroke="#999" strokeWidth="1.400" />
            </Svg>
            CYPE - Portugal [O...
          </li>
        </ul>
      </aside>
      <div className="flex items-center w-1"><Grip vertical /></div>

      <div className="flex-1 min-w-0">
        <div className="flex items-center gap-[5px] h-[31px] pl-[3px] bg-[#cfcfcf]">
          <h3 className="flex-1 text-[14px] font-semibold text-[#111]">CYPE - Portugal</h3>
          <button type="button" disabled className={clsx(dialogButton, "w-[50px] text-[#9a9a9a]")}>
            <Svg box={12} className="w-3 h-3">
              <path d="M2.500 5V1h4.500l2 2v2M1 5h10v4.500H1zM3.500 8h5v3h-5z" fill="#ddd" stroke="#777" strokeWidth="1" />
            </Svg>
            Editar
          </button>
          <button type="button" className={clsx(dialogButton, "w-[55px]")}><FloppyIcon /> Aceitar</button>
          <button type="button" className={clsx(dialogButton, "w-[63px]")}>
            <Svg box={12} className="w-3 h-3"><path d="M2 2l8 8M9.500 1.500L2.500 10.500" stroke="#e81515" strokeWidth="1.600" /></Svg>
            Cancelar
          </button>
        </div>
        <div className="flex items-center gap-[5px] h-[21px] mt-[5px] pl-[5px] bg-[#c3c3c3]">
          <button type="button" aria-label="Desfazer"><UndoIcon /></button>
          <button type="button" aria-label="Refazer"><UndoIcon redo /></button>
        </div>

        <div className="flex border-b border-[#c4c4c4] bg-[#e3e3e3]">
          <RibbonGroup title="Projecto">
            <RibbonButton icon={<GearIcon />} lines={["Parâmetros", "gerais"]} width="w-[56px]" />
          </RibbonGroup>
          <RibbonGroup title="Edição">
            <RibbonButton icon={<TreeIcon />} lines={["Adicionar", "capítulo"]} width="w-12" />
            <RibbonButton icon={<WallIcon />} lines={["Adicionar", "unidade de obra"]} width="w-[74px]" />
            <RibbonButton icon={<ResourceIcon />} lines={["Adicionar recurso", "à composição"]} width="w-20" />
            <RibbonButton icon={<CopyIcon />} lines={["Copiar"]} width="w-9" />
            <RibbonButton icon={<EraserIcon />} lines={["Apagar"]} width="w-9" />
            <RibbonButton icon={<ReplaceIcon />} lines={["Substituir", "código"]} width="w-12" />
            <MoveButtons />
            <div className="flex flex-col gap-[9px] w-[103px] pt-[7px] pl-1.5 border-l border-[#cfcfcf]">
              <button type="button" className={smallAction}><BinocularsIcon small /> Procurar</button>
              <button type="button" className={smallAction}><GotoIcon /> Ir à definição</button>
              <button type="button" className={smallAction}><GotoIcon back /> Voltar à utilização</button>
            </div>
          </RibbonGroup>
          <RibbonGroup title="FIEBDC-3">
            <RibbonButton icon={<FiebdcIcon />} lines={["Importar"]} width="w-[43px]" />
            <RibbonButton icon={<FiebdcIcon out />} lines={["Exportar"]} width="w-[42px]" />
          </RibbonGroup>
          <div className="flex flex-1 items-end">
            <div className="flex-1 h-[15px] bg-[#d3d3d3]" />
          </div>
        </div>

        <div className="flex h-[319px] overflow-hidden">
          <div className="flex-1 min-w-0">
            <TreeTable items={bank} variant="bank" />
          </div>
          <div className="flex flex-col items-center w-3.5 bg-[#efefef]">
            <div className="flex items-center justify-center w-full h-4 bg-[#e9e9e9]"><Caret up /></div>
            <div className="h-[84px]" />
            <Thumb className="w-3 h-[85px]" />
            <div className="flex flex-1 items-end pb-1"><Caret /></div>
          </div>
        </div>

        <div className="flex justify-center h-1 bg-[#e9e9e9]"><Grip /></div>
        <nav className="flex h-[15px] font-bold leading-[15px]">
          <button type="button" className="w-[94px] bg-white">Unidade de obra</button>
          <button type="button" className="w-[62px]">Descrição</button>
          <button type="button" className="w-[105px]">Informação gráfica</button>
          <button type="button" className="w-[109px]">Documentos anexos</button>
        </nav>
        <form className="flex flex-col h-[165px] pt-[7px] px-2 bg-white">
          <div className="flex items-center">
            <label htmlFor="codigo" className="w-9">Código</label>
            <input id="codigo" defaultValue="ILP005" className={clsx(field, "w-[167px]")} />
            <label htmlFor="unidade" className="w-10 ml-2.5">Unidade</label>
            <input id="unidade" defaultValue="Ud" className={clsx(field, "w-[85px]")} />
            <label htmlFor="tipo" className="w-[25px] ml-auto">Tipo</label>
            <div className={clsx(field, "flex items-center gap-1.5 w-[168px] h-[21px]")}>
              <Svg box={14} className="w-3.5 h-3.5">
                <g stroke="#555" strokeWidth=".8">
                  <path d="M1 4l6-3 6 3-6 3z" fill="#e6e6e6" />
                  <path d="M1 4l6 3v6.500L1 10z" fill="#bcbcbc" />
                  <path d="M13 4L7 7v6.500l6-3.500z" fill="#8b8b8b" />
                </g>
              </Svg>
              <select id="tipo" className="flex-1 appearance-none bg-transparent outline-none">
                <option>Sem classificar</option>
              </select>
              <Caret />
            </div>
          </div>
          <div className="flex items-center mt-2">
            <label htmlFor="preco" className="w-[72px]">Preço calculado</label>
            <input id="preco" disabled defaultValue="355.59" className="w-[75px] h-[19px] px-1 text-right text-[#888] bg-[#efefef] border border-[#afafaf]" />
            <span className="ml-1.5">EUR</span>
            <label className="flex items-center gap-[3px] ml-2.5">
              <input type="checkbox" className="appearance-none w-2.5 h-2.5 bg-[#e6e6e6] border border-[#8e8f8f]" />
              Fixar o preço
            </label>
          </div>
          <label htmlFor="resumo" className="h-3 mt-1.5 mb-px leading-3">Resumo</label>
          <div className="flex h-[61px] bg-white border border-[#dfe2e8] border-t-[#abadb3]">
            <textarea
              id="resumo"
              className="flex-1 px-1 pt-[3px] resize-none overflow-hidden outline-none leading-3"
              defaultValue={
                "Fornecimento e instalação na superfície de armário de telecomunicações do edifício (ATE) formado por armário bastidor metálico de solo de 18 unidades de altura, de 988x600x600 mm, acabamento com tinta epóxi, com porta de vidro temperado\n(para alojamento de repartidor geral de par de cobre, repartidor geral do cabo coaxial de CATV e repartidor geral de fibra óptica), tomadas eléctricas e barramento de terra. Inclusive dupla ventilação superior e fecho com chave."
              }
            />
            <div className="flex flex-col items-center justify-between w-3.5 py-1.5 bg-[#efefef] opacity-60">
              <Caret up />
              <Caret />
            </div>
          </div>
          <div className="flex items-center mt-[5px]">
            <label htmlFor="palavras" className="w-[68px]">Palavras-chave</label>
            <input id="palavras" disabled className="flex-1 h-[19px] bg-[#efefef] border border-[#afafaf]" />
            <button type="button" aria-label="Editar palavras-chave" className="flex items-center justify-center w-[19px] h-[19px] ml-1.5 bg-[#f0f0f0] border border-[#777]">
              <Svg box={14} className="w-3.5 h-3.5">
                <path d="M1.500 12.500L3 9l7-7.500 2.500 2.500L5 11.500z" fill="#f4cf2c" stroke="#6b5a18" strokeWidth=".8" />
                <path d="M1.500 12.500l1-2.200 1.300 1.200z" fill="#222" stroke="none" />
              </Svg>
            </button>
          </div>
        </form>
      </div>
    </div>
  </section>
)

const App = () => (
  <main className="relative min-h-screen bg-white font-['Noto_Sans','Open_Sans',sans-serif] text-[9px] leading-[14px] text-[#222]">
    <MainWindow />
    <BankDialog />
    {/* callout from the ribbon button to the dialog */}
    <svg className="absolute left-0 top-0 pointer-events-none" width="800" height="680" fill="none" aria-hidden="true">
      <path d="M98 106C250 330 600 640 786 662" stroke="#f00" strokeWidth="2" />
      <path d="M800 664l-20 6 5-8-3-8z" fill="#f00" />
    </svg>
  </main>
)

export default App
